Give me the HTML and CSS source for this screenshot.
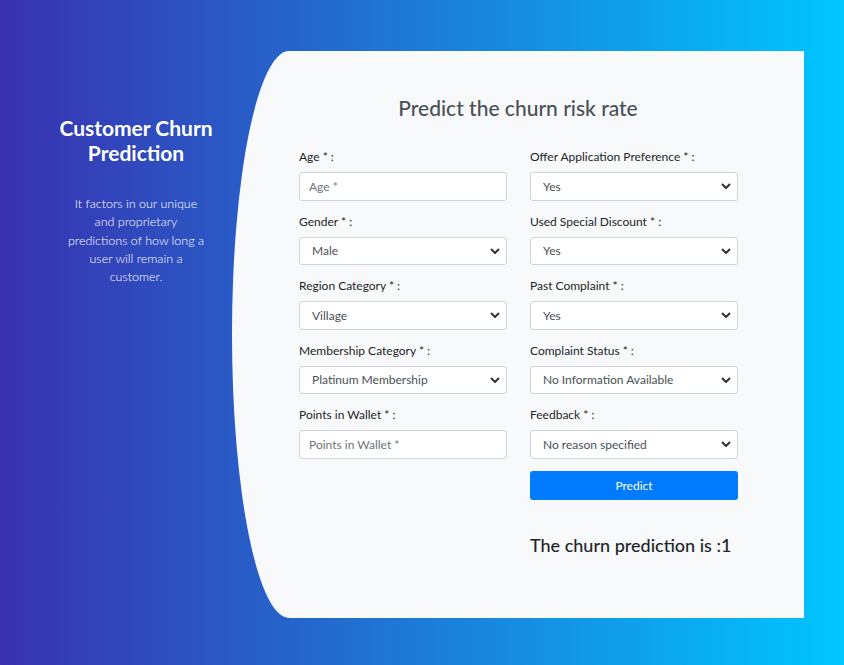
FILE: index.html
```html
<!DOCTYPE html>
<html lang="en">
<head>
  <meta charset="UTF-8">
  <meta name="viewport" content="width=device-width, initial-scale=1.0">
  <title>Customer Churn Prediction</title>
  <link rel="stylesheet" href="styles.css">
</head>
<body>
  <div class="register">
    <!-- Left intro -->
    <div class="register-left">
      <h3>Customer Churn Prediction</h3>
      <p>It factors in our unique and proprietary predictions of how long a user will remain a customer.</p>
    </div>

    <!-- Form card -->
    <div class="register-right">
      <h3 class="register-heading">Predict the churn risk rate</h3>
      <form class="register-form">
        <div class="form-col">
          <div class="form-group">
            <label for="age">Age * :</label>
            <input type="text" id="age" class="form-control" placeholder="Age *">
          </div>
          <div class="form-group">
            <label for="gender">Gender * :</label>
            <div class="select-wrap">
              <select id="gender" class="form-control">
                <option>Male</option>
                <option>Female</option>
              </select>
              <svg class="caret" viewBox="0 0 10 6"><path d="M1 1l4 4 4-4"/></svg>
            </div>
          </div>
          <div class="form-group">
            <label for="region">Region Category * :</label>
            <div class="select-wrap">
              <select id="region" class="form-control">
                <option>Village</option>
                <option>Town</option>
                <option>City</option>
              </select>
              <svg class="caret" viewBox="0 0 10 6"><path d="M1 1l4 4 4-4"/></svg>
            </div>
          </div>
          <div class="form-group">
            <label for="membership">Membership Category * :</label>
            <div class="select-wrap">
              <select id="membership" class="form-control">
                <option>Platinum Membership</option>
                <option>Gold Membership</option>
              </select>
              <svg class="caret" viewBox="0 0 10 6"><path d="M1 1l4 4 4-4"/></svg>
            </div>
          </div>
          <div class="form-group">
            <label for="points">Points in Wallet * :</label>
            <input type="text" id="points" class="form-control" placeholder="Points in Wallet *">
          </div>
        </div>

        <div class="form-col">
          <div class="form-group">
            <label for="offer">Offer Application Preference * :</label>
            <div class="select-wrap">
              <select id="offer" class="form-control">
                <option>Yes</option>
                <option>No</option>
              </select>
              <svg class="caret" viewBox="0 0 10 6"><path d="M1 1l4 4 4-4"/></svg>
            </div>
          </div>
          <div class="form-group">
            <label for="discount">Used Special Discount * :</label>
            <div class="select-wrap">
              <select id="discount" class="form-control">
                <option>Yes</option>
                <option>No</option>
              </select>
              <svg class="caret" viewBox="0 0 10 6"><path d="M1 1l4 4 4-4"/></svg>
            </div>
          </div>
          <div class="form-group">
            <label for="complaint">Past Complaint * :</label>
            <div class="select-wrap">
              <select id="complaint" class="form-control">
                <option>Yes</option>
                <option>No</option>
              </select>
              <svg class="caret" viewBox="0 0 10 6"><path d="M1 1l4 4 4-4"/></svg>
            </div>
          </div>
          <div class="form-group">
            <label for="status">Complaint Status * :</label>
            <div class="select-wrap">
              <select id="status" class="form-control">
                <option>No Information Available</option>
                <option>Solved</option>
                <option>Unsolved</option>
              </select>
              <svg class="caret" viewBox="0 0 10 6"><path d="M1 1l4 4 4-4"/></svg>
            </div>
          </div>
          <div class="form-group">
            <label for="feedback">Feedback * :</label>
            <div class="select-wrap">
              <select id="feedback" class="form-control">
                <option>No reason specified</option>
                <option>Poor Website</option>
              </select>
              <svg class="caret" viewBox="0 0 10 6"><path d="M1 1l4 4 4-4"/></svg>
            </div>
          </div>
          <button type="button" class="btn-predict">Predict</button>
          <h4 class="result">The churn prediction is :1</h4>
        </div>
      </form>
    </div>
  </div>
</body>
</html>
```

FILE: styles.css
```css
* {
  box-sizing: border-box;
}

body {
  margin: 0;
  font-family: Lato, "Open Sans", sans-serif;
  font-size: 12px;
  line-height: 1.5;
  color: #212529;
  background: linear-gradient(to right, #3931af, #00c6ff);
  min-height: 100vh;
}

.register {
  display: flex;
  min-height: 100vh;
  padding: 51px 40px 47px 40px;
}

/* Left intro */
.register-left {
  width: 192px;
  flex-shrink: 0;
  text-align: center;
  color: #fff;
  padding-top: 64px;
}

.register-left h3 {
  margin: 0;
  font-size: 21px;
  font-weight: 700;
  line-height: 25px;
}

.register-left p {
  margin: 30px 0 0;
  padding: 0 26px;
  font-weight: 300;
  font-size: 12.5px;
  line-height: 18.3px;
}

/* Form card */
.register-right {
  flex: 1;
  background: #f8f9fa;
  border-top-left-radius: 10% 50%;
  border-bottom-left-radius: 10% 50%;
  padding-top: 44px;
}

.register-heading {
  margin: 0 0 28px;
  text-align: center;
  font-size: 21px;
  font-weight: 500;
  line-height: 1.2;
  color: #495057;
}

.register-form {
  display: grid;
  grid-template-columns: 1fr 1fr;
  column-gap: 23px;
  padding: 0 66px 0 67px;
}

.form-group {
  margin-bottom: 12px;
}

label {
  display: block;
  margin-bottom: 6px;
  line-height: 18px;
}

.form-control {
  display: block;
  width: 100%;
  height: 28.5px;
  padding: 0 9px;
  font-family: inherit;
  font-size: 12px;
  color: #495057;
  background: #fff;
  border: 1px solid #ced4da;
  border-radius: 3px;
  outline: none;
}

.form-control::placeholder {
  color: #6c757d;
}

.select-wrap {
  position: relative;
}

.select-wrap select {
  appearance: none;
  -webkit-appearance: none;
  padding-left: 12px;
}

.caret {
  position: absolute;
  right: 7px;
  top: 11px;
  width: 10px;
  height: 6px;
  pointer-events: none;
}

.caret path {
  fill: none;
  stroke: #333;
  stroke-width: 2;
}

.btn-predict {
  display: block;
  width: 100%;
  height: 29px;
  border: none;
  border-radius: 3px;
  background-color: #007bff;
  color: #fff;
  font-family: inherit;
  font-size: 12px;
  cursor: pointer;
}

.result {
  margin: 35px 0 0;
  font-size: 18px;
  font-weight: 500;
  line-height: 1.2;
  white-space: nowrap;
  color: #212529;
}
```
